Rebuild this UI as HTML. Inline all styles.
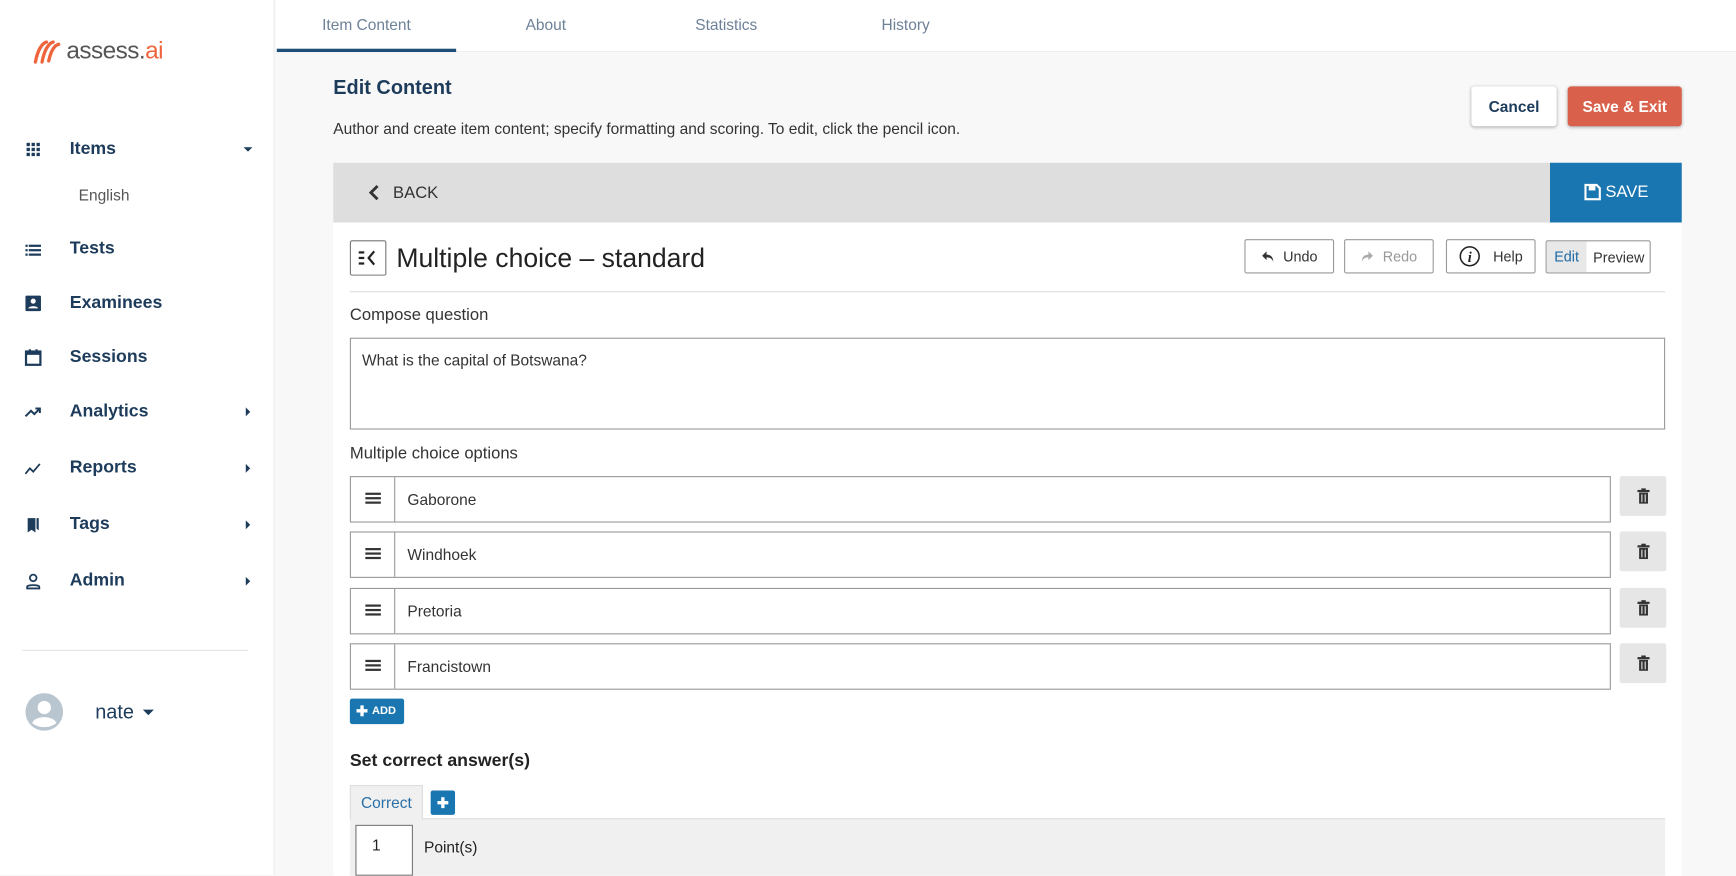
<!DOCTYPE html>
<html><head><meta charset="utf-8"><style>
*{box-sizing:border-box;margin:0;padding:0}
html,body{width:1736px;height:863px;overflow:hidden;background:#f8f8f8;font-family:"Liberation Sans",Arial,sans-serif}
#w{position:absolute;left:0;top:0;width:1568px;height:790px;transform:scale(1.10714);transform-origin:0 0}
.a{position:absolute}
.sb{left:0;top:0;width:248px;height:790px;background:#fff;border-right:1px solid #ececec}
.nav{position:absolute;left:63px;font-size:16px;color:#1d3b5a;font-weight:bold;transform:translateY(-50%)}
.ic{position:absolute;left:22px;width:16px;height:16px;transform:translateY(-50%)}
.ar{position:absolute;left:222px;width:0;height:0;border-top:4px solid transparent;border-bottom:4px solid transparent;border-left:4px solid #1d3b5a;transform:translateY(-50%)}
.tab{position:absolute;top:0;height:47px;line-height:44px;font-size:14px;color:#6d8198;text-align:center}
.btn{position:absolute;border:1px solid #999;border-radius:2px;background:#fff;font-size:13px;color:#333;display:flex;align-items:center;justify-content:center;gap:8px}
.opt{position:absolute;left:316px;width:1139px;height:42px;border:1px solid #999;background:#fff}
.opt .h{position:absolute;left:0;top:0;width:40px;height:100%;border-right:1px solid #999}
.opt .h i{position:absolute;left:13px;width:14px;height:2px;background:#333}
.opt span{position:absolute;left:51px;top:12px;font-size:14px;color:#333}
.tr{position:absolute;left:1463px;width:42px;height:36px;background:#e6e6e6;border-radius:2px}
</style></head><body><div id="w">
<div class="a sb">
 <svg class="a" style="left:28px;top:35px" width="28" height="24" viewBox="0 0 28 24"><g fill="none" stroke="#f0643c" stroke-width="3" stroke-linecap="round"><path d="M4 21 C6 10 10 4 14 3"/><path d="M10 21 C12 10 16 4 20 3"/><path d="M16 20 C18 11 21 6 25 5"/></g></svg>
 <div class="a" style="left:60px;top:33px;font-size:22px;color:#555;letter-spacing:-0.5px">assess.<span style="color:#f0643c">ai</span></div>
 <svg class="ic" style="top:135px" viewBox="0 0 16 16" fill="#1d3b5a"><rect x="2" y="2" width="3" height="3"/><rect x="6.5" y="2" width="3" height="3"/><rect x="11" y="2" width="3" height="3"/><rect x="2" y="6.5" width="3" height="3"/><rect x="6.5" y="6.5" width="3" height="3"/><rect x="11" y="6.5" width="3" height="3"/><rect x="2" y="11" width="3" height="3"/><rect x="6.5" y="11" width="3" height="3"/><rect x="11" y="11" width="3" height="3"/></svg>
 <div class="nav" style="top:135px">Items</div>
 <div class="a" style="left:220px;top:133px;border-left:4px solid transparent;border-right:4px solid transparent;border-top:4px solid #1d3b5a"></div>
 <div class="a" style="left:71px;top:168px;font-size:14px;color:#555">English</div>
 <svg class="ic" style="top:226px" viewBox="0 0 16 16" fill="#1d3b5a"><rect x="1" y="3" width="2" height="2"/><rect x="4" y="3" width="11" height="2"/><rect x="1" y="7" width="2" height="2"/><rect x="4" y="7" width="11" height="2"/><rect x="1" y="11" width="2" height="2"/><rect x="4" y="11" width="11" height="2"/></svg>
 <div class="nav" style="top:225px">Tests</div>
 <svg class="ic" style="top:274px" viewBox="0 0 16 16"><rect x="1" y="1" width="14" height="14" rx="1" fill="#1d3b5a"/><circle cx="8" cy="6" r="2.3" fill="#fff"/><path d="M3.5 12.5c1-2.5 8-2.5 9 0" fill="#fff"/></svg>
 <div class="nav" style="top:274px">Examinees</div>
 <svg class="ic" style="top:323px" viewBox="0 0 16 16"><rect x="1.5" y="2.5" width="13" height="12" fill="none" stroke="#1d3b5a" stroke-width="2"/><rect x="1.5" y="2.5" width="13" height="3" fill="#1d3b5a"/><rect x="4" y="0.5" width="2" height="3" fill="#1d3b5a"/><rect x="10" y="0.5" width="2" height="3" fill="#1d3b5a"/></svg>
 <div class="nav" style="top:323px">Sessions</div>
 <svg class="ic" style="top:372px" viewBox="0 0 16 16" fill="none" stroke="#1d3b5a" stroke-width="1.8"><path d="M1 12l5-5 3 3 5-5"/><path d="M10 5h4v4"/></svg>
 <div class="nav" style="top:372px">Analytics</div><div class="ar" style="top:372px"></div>
 <svg class="ic" style="top:423px" viewBox="0 0 16 16" fill="none" stroke="#1d3b5a" stroke-width="1.6"><path d="M1 13l4-5 3 3 6-7"/></svg>
 <div class="nav" style="top:423px">Reports</div><div class="ar" style="top:423px"></div>
 <svg class="ic" style="top:474px" viewBox="0 0 16 16" fill="#1d3b5a"><path d="M3 2h7v13l-3.5-2.5L3 15z"/><path d="M11 2h2v11l-2-1.5z"/></svg>
 <div class="nav" style="top:474px">Tags</div><div class="ar" style="top:474px"></div>
 <svg class="ic" style="top:525px" viewBox="0 0 16 16" fill="none" stroke="#1d3b5a" stroke-width="1.6"><circle cx="8" cy="5" r="3"/><path d="M2.5 14.5v-1.5c0-2 11-2 11 0v1.5z"/></svg>
 <div class="nav" style="top:525px">Admin</div><div class="ar" style="top:525px"></div>
 <div class="a" style="left:20px;top:587px;width:204px;height:1px;background:#e5e5e5"></div>
 <svg class="a" style="left:23px;top:626px" width="34" height="34" viewBox="0 0 34 34"><circle cx="17" cy="17" r="17" fill="#b9c5cf"/><circle cx="17" cy="13" r="6" fill="#fff"/><path d="M6 27c3-7 19-7 22 0c-6 5-16 5-22 0z" fill="#fff"/></svg>
 <div class="a" style="left:86px;top:633px;font-size:18px;color:#1d3b5a">nate</div>
 <div class="a" style="left:129px;top:641px;border-left:5px solid transparent;border-right:5px solid transparent;border-top:5px solid #1d3b5a"></div>
</div>
<div class="a" style="left:249px;top:0;width:1319px;height:47px;background:#fff;border-bottom:1px solid #eee"></div>
<div class="tab" style="left:250px;width:162px;border-bottom:3px solid #1f4e79">Item Content</div>
<div class="tab" style="left:433px;width:120px">About</div>
<div class="tab" style="left:596px;width:120px">Statistics</div>
<div class="tab" style="left:758px;width:120px">History</div>
<div class="a" style="left:301px;top:69px;font-size:18px;font-weight:bold;color:#1d3b5a">Edit Content</div>
<div class="a" style="left:301px;top:108px;font-size:14px;color:#333">Author and create item content; specify formatting and scoring. To edit, click the pencil icon.</div>
<div class="a" style="left:1329px;top:78px;width:77px;height:36px;background:#fff;border-radius:3px;box-shadow:0 1px 3px rgba(0,0,0,.3);font-size:14px;color:#1d3b5a;font-weight:bold;text-align:center;line-height:36px">Cancel</div>
<div class="a" style="left:1416px;top:78px;width:103px;height:36px;background:#d9604a;border-radius:3px;box-shadow:0 1px 3px rgba(0,0,0,.3);font-size:14px;color:#fff;font-weight:bold;text-align:center;line-height:36px">Save &amp; Exit</div>
<div class="a" style="left:301px;top:147px;width:1099px;height:54px;background:#dedede"></div>
<svg class="a" style="left:333px;top:167px" width="10" height="14" viewBox="0 0 10 14"><path d="M8 1L2 7l6 6" fill="none" stroke="#333" stroke-width="2.6"/></svg>
<div class="a" style="left:355px;top:166px;font-size:15px;color:#333">BACK</div>
<div class="a" style="left:1400px;top:147px;width:119px;height:54px;background:#1a76b0"></div>
<svg class="a" style="left:1431px;top:166px" width="15" height="15" viewBox="0 0 15 15"><path d="M1 1h10l3 3v10H1z" fill="none" stroke="#fff" stroke-width="2"/><rect x="4" y="2" width="6" height="4" fill="#fff"/></svg>
<div class="a" style="left:1450px;top:165px;font-size:15px;color:#fff">SAVE</div>
<div class="a" style="left:301px;top:201px;width:1218px;height:590px;background:#fff"></div>
<div class="a" style="left:316px;top:217px;width:33px;height:32px;border:1px solid #777;border-radius:2px"></div>
<svg class="a" style="left:323px;top:224px" width="20" height="18" viewBox="0 0 20 18" fill="#222"><rect x="1" y="3" width="5" height="2"/><rect x="1" y="8" width="5" height="2"/><rect x="1" y="13" width="5" height="2"/><path d="M15 3l-5 6 5 6" fill="none" stroke="#222" stroke-width="2"/></svg>
<div class="a" style="left:358px;top:220px;font-size:24px;color:#222">Multiple choice – standard</div>
<div class="btn" style="left:1124px;top:216px;width:81px;height:31px"><svg width="12" height="12" viewBox="0 0 12 12"><path d="M5 1L1 5l4 4V6.5c3 0 5 1 6 4c0-4-2-6.5-6-6.5z" fill="#333"/></svg>Undo</div>
<div class="btn" style="left:1214px;top:216px;width:81px;height:31px;color:#999"><svg width="12" height="12" viewBox="0 0 12 12"><path d="M7 1l4 4-4 4V6.5c-3 0-5 1-6 4c0-4 2-6.5 6-6.5z" fill="#aaa"/></svg>Redo</div>
<div class="btn" style="left:1306px;top:216px;width:81px;height:31px;gap:12px"><svg width="19" height="19" viewBox="0 0 19 19"><circle cx="9.5" cy="9.5" r="8.5" fill="none" stroke="#222" stroke-width="1.4"/><text x="9.5" y="14.5" font-family="Liberation Serif" font-style="italic" font-weight="bold" font-size="13" text-anchor="middle" fill="#222">i</text></svg>Help</div>
<div class="btn" style="left:1396px;top:217px;width:95px;height:30px;justify-content:flex-start;gap:0;overflow:hidden"><span style="background:#e8e8e8;color:#1d6aa5;width:36px;height:100%;line-height:28px;text-align:center">Edit</span><span style="padding-left:6px">Preview</span></div>
<div class="a" style="left:316px;top:263px;width:1188px;height:1px;background:#ddd"></div>
<div class="a" style="left:316px;top:276px;font-size:15px;color:#333">Compose question</div>
<div class="a" style="left:316px;top:305px;width:1188px;height:83px;border:1px solid #999"></div>
<div class="a" style="left:327px;top:317px;font-size:14px;color:#333">What is the capital of Botswana?</div>
<div class="a" style="left:316px;top:401px;font-size:15px;color:#333">Multiple choice options</div>
<div class="opt" style="top:430px"><div class="h"><i style="top:14px"></i><i style="top:18px"></i><i style="top:22px"></i></div><span>Gaborone</span></div>
<div class="opt" style="top:480px"><div class="h"><i style="top:14px"></i><i style="top:18px"></i><i style="top:22px"></i></div><span>Windhoek</span></div>
<div class="opt" style="top:531px"><div class="h"><i style="top:14px"></i><i style="top:18px"></i><i style="top:22px"></i></div><span>Pretoria</span></div>
<div class="opt" style="top:581px"><div class="h"><i style="top:14px"></i><i style="top:18px"></i><i style="top:22px"></i></div><span>Francistown</span></div>
<div class="tr" style="top:430px"></div><div class="tr" style="top:480px"></div><div class="tr" style="top:531px"></div><div class="tr" style="top:581px"></div>
<svg class="a" style="left:1479px;top:441px" width="11" height="14" viewBox="0 0 11 14" fill="#333"><rect x="0" y="1.5" width="11" height="2"/><rect x="3.5" y="0" width="4" height="2"/><path d="M1.5 4h8v10h-8z"/><rect x="3.5" y="5.5" width="1" height="7" fill="#e6e6e6"/><rect x="6.5" y="5.5" width="1" height="7" fill="#e6e6e6"/></svg>
<svg class="a" style="left:1479px;top:491px" width="11" height="14" viewBox="0 0 11 14" fill="#333"><rect x="0" y="1.5" width="11" height="2"/><rect x="3.5" y="0" width="4" height="2"/><path d="M1.5 4h8v10h-8z"/><rect x="3.5" y="5.5" width="1" height="7" fill="#e6e6e6"/><rect x="6.5" y="5.5" width="1" height="7" fill="#e6e6e6"/></svg>
<svg class="a" style="left:1479px;top:542px" width="11" height="14" viewBox="0 0 11 14" fill="#333"><rect x="0" y="1.5" width="11" height="2"/><rect x="3.5" y="0" width="4" height="2"/><path d="M1.5 4h8v10h-8z"/><rect x="3.5" y="5.5" width="1" height="7" fill="#e6e6e6"/><rect x="6.5" y="5.5" width="1" height="7" fill="#e6e6e6"/></svg>
<svg class="a" style="left:1479px;top:592px" width="11" height="14" viewBox="0 0 11 14" fill="#333"><rect x="0" y="1.5" width="11" height="2"/><rect x="3.5" y="0" width="4" height="2"/><path d="M1.5 4h8v10h-8z"/><rect x="3.5" y="5.5" width="1" height="7" fill="#e6e6e6"/><rect x="6.5" y="5.5" width="1" height="7" fill="#e6e6e6"/></svg>
<div class="a" style="left:316px;top:631px;width:49px;height:23px;background:#1a76b0;border-radius:2px;color:#fff;font-size:10px;font-weight:bold;line-height:23px;padding-left:20px">ADD</div>
<svg class="a" style="left:322px;top:637px" width="10" height="10" viewBox="0 0 10 10"><path d="M5 0v10M0 5h10" stroke="#fff" stroke-width="3"/></svg>
<div class="a" style="left:316px;top:679px;font-size:16px;font-weight:bold;color:#222">Set correct answer(s)</div>
<div class="a" style="left:316px;top:739px;width:1188px;height:52px;background:#f0f0f0;border-top:1px solid #ddd"></div>
<div class="a" style="left:316px;top:709px;width:66px;height:31px;background:#f0f0f0;border:1px solid #ddd;border-bottom:none;color:#2a70a8;font-size:14px;text-align:center;line-height:31px">Correct</div>
<div class="a" style="left:389px;top:714px;width:22px;height:22px;background:#1a76b0;border-radius:2px"></div>
<svg class="a" style="left:395px;top:720px" width="10" height="10" viewBox="0 0 10 10"><path d="M5 0v10M0 5h10" stroke="#fff" stroke-width="3"/></svg>
<div class="a" style="left:321px;top:745px;width:52px;height:46px;background:#fff;border:1px solid #777;font-size:14px;padding:9px 0 0 14px;color:#222">1</div>
<div class="a" style="left:383px;top:757px;font-size:14px;color:#222">Point(s)</div>
</div></body></html>
